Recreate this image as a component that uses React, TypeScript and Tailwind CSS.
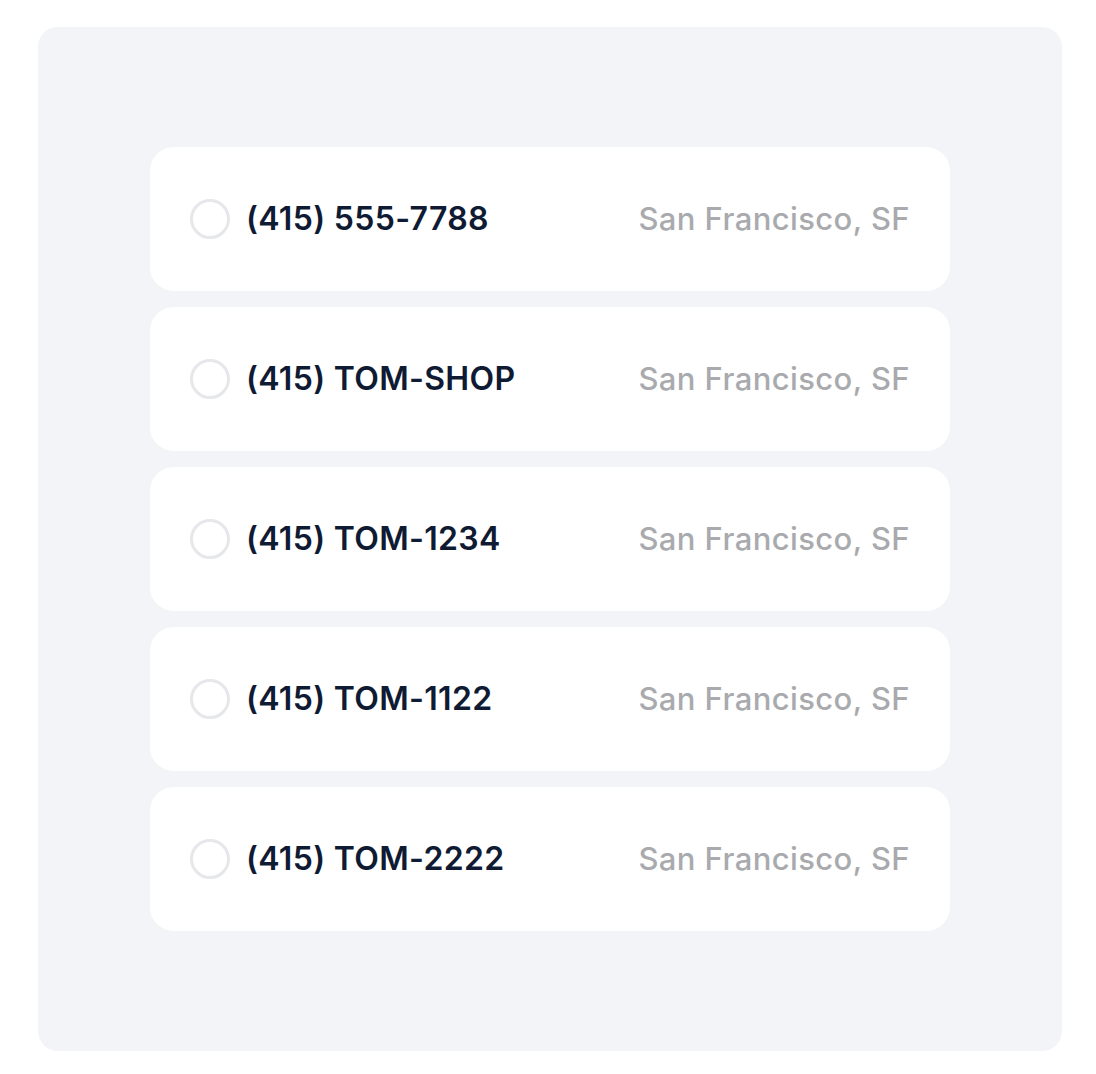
const NUMBERS = [
  "(415) 555-7788",
  "(415) TOM-SHOP",
  "(415) TOM-1234",
  "(415) TOM-1122",
  "(415) TOM-2222",
];

export default function App() {
  return (
    <div className="min-h-screen bg-white px-[38px] pt-[27px] font-['Inter',sans-serif]">
      <div className="flex w-[1024px] flex-col gap-4 rounded-[20px] bg-[#f3f4f8] px-[112px] py-[120px]">
        {NUMBERS.map((num) => (
          <label
            key={num}
            className="flex h-[144px] cursor-pointer items-center rounded-[24px] bg-white px-10"
          >
            <span className="h-10 w-10 shrink-0 rounded-full border-[3px] border-[#e6e7ea]" />
            <span className="ml-4 text-[32px] font-semibold tracking-[0.01em] text-[#0f1a33]">
              {num}
            </span>
            <span className="ml-auto text-[31px] font-medium tracking-[0.013em] text-[#a9aaae]">
              San Francisco, SF
            </span>
          </label>
        ))}
      </div>
    </div>
  );
}
